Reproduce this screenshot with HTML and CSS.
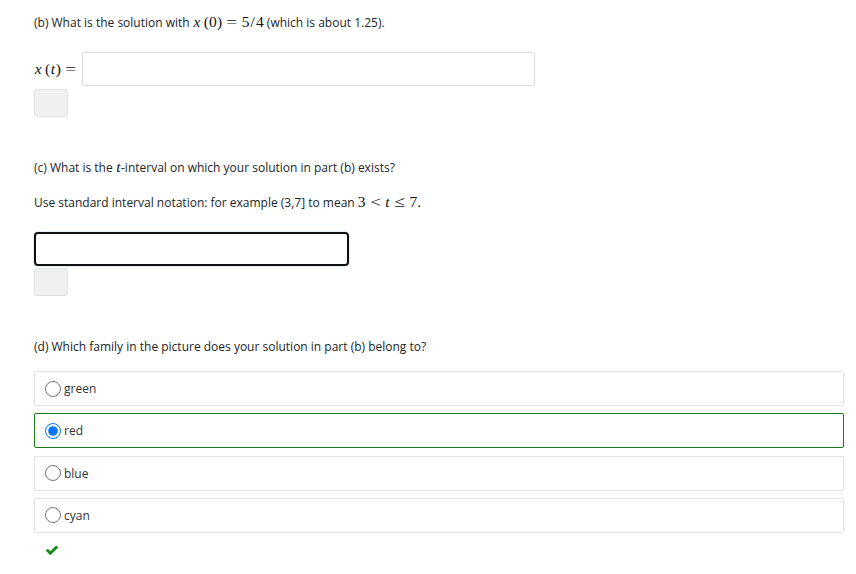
FILE: index.html
```html
<!DOCTYPE html>
<html>
<head>
<meta charset="utf-8">
<link rel="stylesheet" href="styles.css">
</head>
<body>
<div class="page">
  <p class="q q-b">(b) What is the solution with <span class="m"><span class="v vx">x</span><span class="p ts">(</span>0<span class="p">)</span><span class="r">=</span>5<span class="sl">/</span>4</span> (which is about 1.25).</p>
  <div class="ans-row">
    <span class="m lbl"><span class="v vx">x</span><span class="p ts">(</span><span class="v vt">t</span><span class="p">)</span><span class="r">=</span></span>
    <div class="tbox"></div>
  </div>
  <div class="btn"></div>

  <p class="q q-c">(c) What is the <span class="m"><span class="v vt">t</span></span>-interval on which your solution in part (b) exists?</p>
  <p class="q q-use">Use standard interval notation: for example (3,7] to mean <span class="m">3<span class="r">&lt;</span><span class="v vt">t</span><span class="r">&le;</span>7.</span></p>
  <div class="tbox focus"></div>
  <div class="btn btn2"></div>

  <p class="q q-d">(d) Which family in the picture does your solution in part (b) belong to?</p>
  <div class="opts">
    <label class="opt"><input type="radio" name="f"><span>green</span></label>
    <label class="opt sel"><input type="radio" name="f" checked><span>red</span></label>
    <label class="opt"><input type="radio" name="f"><span>blue</span></label>
    <label class="opt"><input type="radio" name="f"><span>cyan</span></label>
  </div>
  <div class="check">
    <svg width="14" height="11" viewBox="0 0 14 11"><path d="M0.8 5.8 L2.8 3.8 L5.3 6.3 L11.2 0.4 L13.2 2.4 L5.3 10.3 Z" fill="#118a11"/></svg>
  </div>
</div>
</body>
</html>
```
FILE: styles.css
```css
html, body {
  margin: 0;
  padding: 0;
  background: #fff;
}
.page {
  font-family: "Open Sans", "Noto Sans", sans-serif;
  font-size: 12px;
  color: #212529;
  padding: 13px 12px 0 34px;
  display: flex;
  flex-direction: column;
  align-items: flex-start;
}
.q {
  margin: 0;
  line-height: 18px;
  height: 18px;
  white-space: nowrap;
}
.m {
  font-family: "Liberation Serif", "DejaVu Serif", serif;
  font-size: 15.5px;
  line-height: 18px;
  color: #111;
  white-space: nowrap;
}
.v {
  display: inline-block;
  font-style: italic;
  text-align: center;
}
.vx { width: 8.3px; }
.vt { width: 5.2px; }
.p {
  display: inline-block;
  width: 5.6px;
  text-align: center;
}
.ts { margin-left: 2.4px; }
.r {
  display: inline-block;
  width: 11.3px;
  margin: 0 4px;
  text-align: center;
  transform: scaleX(1.25);
}
.sl {
  display: inline-block;
  width: 6.5px;
  text-align: center;
}
.ans-row {
  margin-top: 21px;
  display: flex;
  align-items: center;
}
.lbl {
  width: 48px;
}
.tbox {
  width: 453px;
  height: 34px;
  box-sizing: border-box;
  border: 1px solid #dcdcdc;
  border-radius: 2px;
  background: #fff;
}
.tbox.focus {
  width: 315px;
  margin-top: 21px;
  border: 2px solid #111;
  border-radius: 4px;
  box-shadow: 0 0 0 1px #e6eefb;
}
.btn {
  margin-top: 3px;
  width: 34px;
  height: 28px;
  box-sizing: border-box;
  background: #f0f0f0;
  border: 1px solid #e2e2e2;
  border-radius: 3px;
}
.btn2 {
  margin-top: 2px;
}
.q-c { margin-top: 41px; }
.q-use { margin-top: 17px; }
.q-d { margin-top: 42px; }
.opts {
  margin-top: 15px;
  width: 100%;
  display: flex;
  flex-direction: column;
  gap: 7.33px;
}
.opt {
  height: 35px;
  box-sizing: border-box;
  border: 1px solid #e3e3e3;
  border-radius: 2px;
  display: flex;
  align-items: center;
  padding-left: 10px;
  font-size: 12px;
  color: #333;
}
.opt.sel {
  border-color: #1c7a1c;
}
.opt input {
  width: 16px;
  height: 16px;
  margin: 0 3px 0 0;
}
.check {
  margin-top: 12px;
  padding-left: 11px;
  height: 12px;
}
.check svg { display: block; }
```
